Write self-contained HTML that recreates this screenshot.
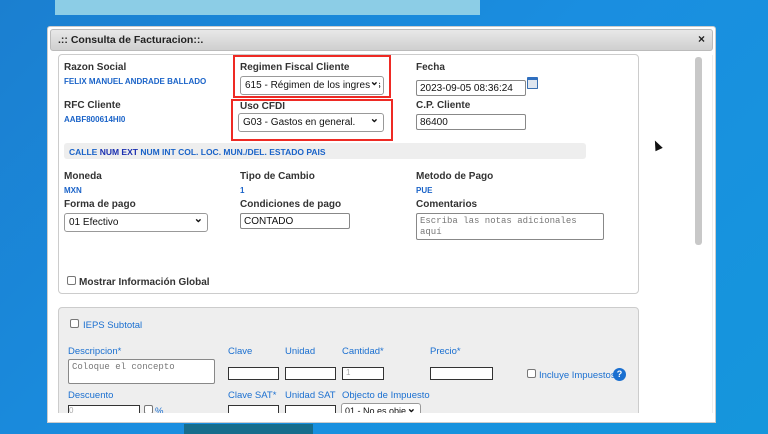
<!DOCTYPE html>
<html><head><meta charset="utf-8"><style>
*{margin:0;padding:0;box-sizing:border-box}
body{width:768px;height:434px;overflow:hidden;position:relative;background:linear-gradient(135deg,#1b7fd0 0%,#1a8ee0 50%,#1596dc 100%);font-family:"Liberation Sans",sans-serif;}
.a{position:absolute;white-space:nowrap}
.lbl{font-size:10px;font-weight:bold;color:#333}
.val{font-size:8px;font-weight:bold;color:#1a63c8}
.blu{font-size:9.5px;color:#1a6fd0}
.inp{background:#fff;border:1px solid #888;font-size:10px;color:#111;padding:2px 3px;border-radius:2px;overflow:hidden}
.sel{background:#fff;border:1px solid #999;border-radius:3px;font-size:10px;color:#111;padding:3px 14px 3px 4px;overflow:hidden}
.sel:after{content:"⌄";position:absolute;right:4px;top:-2px;font-size:11px;font-weight:bold;background:#fff}
.red{border:2px solid #ee2a24}
.cb{width:9px;height:9px;border:1px solid #777;border-radius:2px;background:#fff}
.box{background:#fff;border:1px solid #333}
</style></head><body>
<div class="a" style="left:55px;top:0;width:425px;height:15px;background:#8ccde6"></div>
<div class="a" style="left:184px;top:424px;width:129px;height:10px;background:#166d8c"></div>
<div class="a" style="left:47px;top:26px;width:669px;height:397px;background:#fff;border:1px solid #ccc;border-radius:3px"></div>
<div class="a" style="left:50px;top:29px;width:663px;height:22px;background:linear-gradient(#e8e8e8,#cfcfcf);border:1px solid #bbb;border-radius:3px"></div>
<div class="a" style="left:58px;top:34px;font-size:10.5px;font-weight:bold;color:#222">.:: Consulta de Facturacion::.</div>
<div class="a" style="left:698px;top:32px;font-size:12px;font-weight:bold;color:#222">×</div>
<div class="a" style="left:695px;top:57px;width:7px;height:188px;background:#c8c8c8;border-radius:3px"></div>
<div class="a" style="left:712px;top:55px;width:1px;height:358px;background:#eee"></div>
<div class="a" style="left:58px;top:54px;width:581px;height:240px;border:1px solid #ccc;border-radius:4px"></div>
<div class="a lbl" style="left:64px;top:62px">Razon Social</div>
<div class="a val" style="left:64px;top:77px">FELIX MANUEL ANDRADE BALLADO</div>
<div class="a lbl" style="left:64px;top:100px">RFC Cliente</div>
<div class="a val" style="left:64px;top:115px">AABF800614HI0</div>
<div class="a red" style="left:233px;top:55px;width:158px;height:43px"></div>
<div class="a red" style="left:231px;top:99px;width:162px;height:42px"></div>
<div class="a lbl" style="left:240px;top:62px">Regimen Fiscal Cliente</div>
<div class="a sel" style="left:240px;top:76px;width:144px;height:19px">615 - Régimen de los ingresos</div>
<div class="a lbl" style="left:240px;top:101px">Uso CFDI</div>
<div class="a sel" style="left:238px;top:113px;width:146px;height:19px">G03 - Gastos en general.</div>
<div class="a lbl" style="left:416px;top:62px">Fecha</div>
<div class="a inp" style="left:416px;top:80px;width:110px;height:16px">2023-09-05 08:36:24</div>
<div class="a" style="left:527px;top:77px;width:11px;height:12px;background:#dfe6ef;border:1px solid #3a6fb0;border-top:3px solid #2f6fc0;border-radius:1px"></div>
<div class="a lbl" style="left:416px;top:100px">C.P. Cliente</div>
<div class="a inp" style="left:416px;top:114px;width:110px;height:16px">86400</div>
<div class="a" style="left:64px;top:143px;width:522px;height:16px;background:#eee;border-radius:3px"></div>
<div class="a" style="left:69px;top:147px;font-size:8.5px;font-weight:bold;color:#1a63c8">CALLE <span style="color:#1a2fb0">NUM EXT</span> NUM INT COL. LOC. MUN./DEL. ESTADO PAIS</div>
<div class="a lbl" style="left:64px;top:171px">Moneda</div>
<div class="a val" style="left:64px;top:186px">MXN</div>
<div class="a lbl" style="left:64px;top:199px">Forma de pago</div>
<div class="a sel" style="left:64px;top:213px;width:144px;height:19px">01 Efectivo</div>
<div class="a lbl" style="left:240px;top:171px">Tipo de Cambio</div>
<div class="a val" style="left:240px;top:186px">1</div>
<div class="a lbl" style="left:240px;top:199px">Condiciones de pago</div>
<div class="a inp" style="left:240px;top:213px;width:110px;height:16px">CONTADO</div>
<div class="a lbl" style="left:416px;top:171px">Metodo de Pago</div>
<div class="a val" style="left:416px;top:186px">PUE</div>
<div class="a lbl" style="left:416px;top:199px">Comentarios</div>
<div class="a inp" style="left:416px;top:213px;width:188px;height:27px;font-family:'Liberation Mono',monospace;font-size:9px;color:#777;line-height:11px;white-space:normal">Escriba las notas adicionales aquí</div>
<div class="a cb" style="left:67px;top:276px"></div>
<div class="a lbl" style="left:79px;top:277px">Mostrar Información Global</div>
<div class="a" style="left:58px;top:307px;width:581px;height:110px;background:#eee;border:1px solid #ccc;border-radius:4px"></div>
<div class="a cb" style="left:70px;top:319px"></div>
<div class="a blu" style="left:83px;top:320px">IEPS Subtotal</div>
<div class="a blu" style="left:68px;top:346px">Descripcion*</div>
<div class="a inp" style="left:68px;top:359px;width:147px;height:25px;font-family:'Liberation Mono',monospace;font-size:9px;color:#777">Coloque el concepto</div>
<div class="a blu" style="left:228px;top:346px">Clave</div>
<div class="a box" style="left:228px;top:367px;width:51px;height:13px"></div>
<div class="a blu" style="left:285px;top:346px">Unidad</div>
<div class="a box" style="left:285px;top:367px;width:51px;height:13px"></div>
<div class="a blu" style="left:342px;top:346px">Cantidad*</div>
<div class="a box" style="left:342px;top:367px;width:42px;height:13px;font-size:8px;color:#aaa;padding-left:3px">1</div>
<div class="a blu" style="left:430px;top:346px">Precio*</div>
<div class="a box" style="left:430px;top:367px;width:63px;height:13px"></div>
<div class="a cb" style="left:527px;top:369px"></div>
<div class="a blu" style="left:539px;top:370px">Incluye Impuestos</div>
<div class="a" style="left:613px;top:368px;width:13px;height:13px;border-radius:50%;background:#1a6fd0;color:#fff;font-size:9px;font-weight:bold;text-align:center;line-height:13px">?</div>
<div class="a blu" style="left:68px;top:390px">Descuento</div>
<div class="a box" style="left:68px;top:405px;width:72px;height:13px;font-size:8px;color:#aaa">0</div>
<div class="a cb" style="left:144px;top:405px"></div>
<div class="a blu" style="left:155px;top:406px">%</div>
<div class="a blu" style="left:228px;top:390px">Clave SAT*</div>
<div class="a box" style="left:228px;top:405px;width:51px;height:13px"></div>
<div class="a blu" style="left:285px;top:390px">Unidad SAT</div>
<div class="a box" style="left:285px;top:405px;width:51px;height:13px"></div>
<div class="a blu" style="left:342px;top:390px">Objecto de Impuesto</div>
<div class="a sel" style="left:341px;top:403px;width:80px;height:15px;font-size:9px;padding:2px 3px">01 - No es obje</div>
<div class="a" style="left:47px;top:413px;width:669px;height:10px;background:#fff;border:1px solid #ccc;border-top:none"></div>
<div class="a" style="left:653px;top:140px;width:0;height:0;border-left:4px solid transparent;border-right:4px solid transparent;border-bottom:10px solid #111;transform:rotate(-25deg)"></div>
</body></html>
